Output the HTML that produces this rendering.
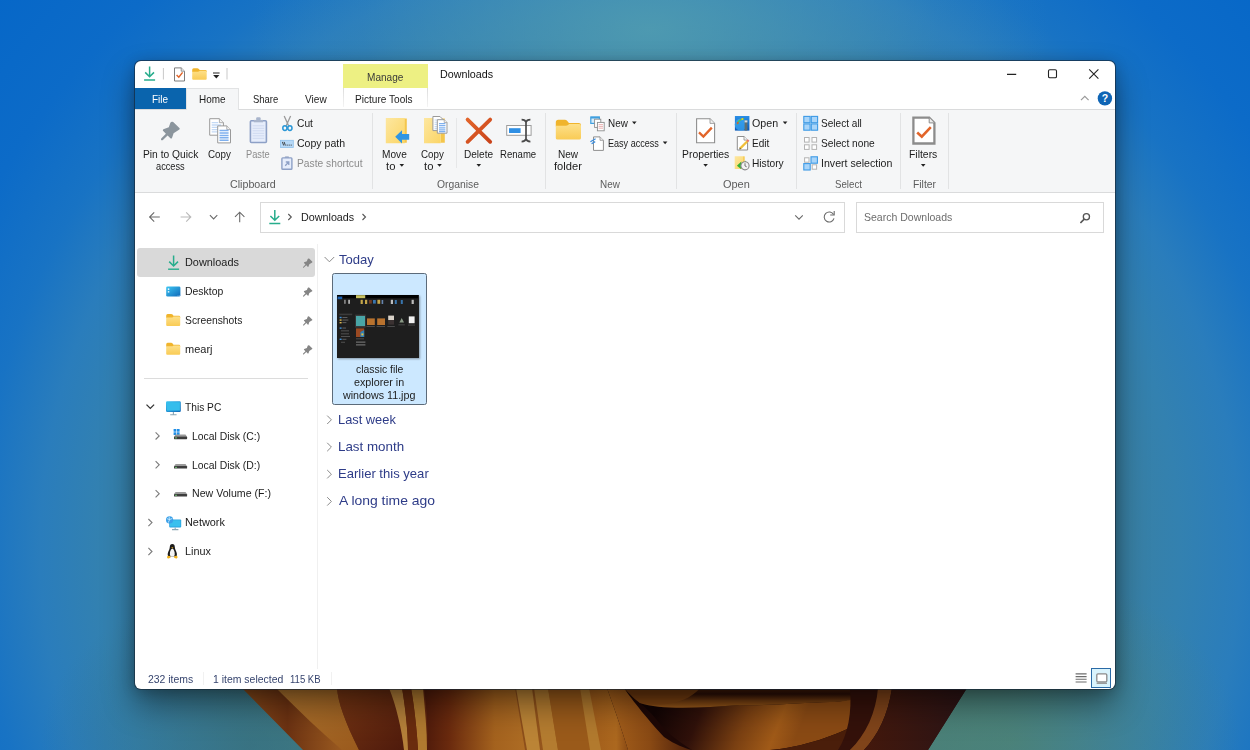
<!DOCTYPE html>
<html><head><meta charset="utf-8"><title>Downloads</title>
<style>
*{box-sizing:border-box;margin:0;padding:0}
html,body{width:1250px;height:750px;overflow:hidden}
body{position:relative;font-family:"Liberation Sans",sans-serif;font-size:10.3px;color:#222;background:#0a6ac8}
#bloom{position:absolute;left:0;top:0}
#win{position:absolute;left:135px;top:61px;width:980.4px;height:627.5px;background:#fff;border-radius:6px;overflow:hidden;
box-shadow:0 0 0 1px rgba(22,38,55,.62),0 16px 32px rgba(0,0,0,.42),0 2px 14px rgba(0,0,0,.22)}
#c{position:absolute;left:-135px;top:-61px;width:1250px;height:750px}
.t{position:absolute;white-space:nowrap;transform-origin:0 50%}
.b{position:absolute}
#ic{position:absolute;left:0;top:0}

#bg{position:absolute;left:0;top:0;width:1250px;height:750px;
background:radial-gradient(ellipse 210px 160px at 250px 745px, rgba(52,104,112,.55) 0, rgba(52,104,112,0) 100%),radial-gradient(ellipse 230px 170px at 1010px 740px, rgba(84,132,100,.55) 0, rgba(84,132,100,0) 100%),radial-gradient(ellipse 400px 200px at 650px 30px, rgba(84,160,178,.78) 0, rgba(76,152,182,.5) 40%, rgba(66,145,188,.16) 72%, rgba(60,140,190,0) 100%),
radial-gradient(circle at 640px 550px, #4f7d6a 0px, #4b7c70 260px, #437f8a 380px, #3b80a0 470px, #3381b0 540px, #2a7dbc 600px, #1873c4 660px, #0c6bc8 740px, #0667c8 850px);}

</style></head>
<body>
<div id="bg"></div>
<svg id="bloom" width="1250" height="750" viewBox="0 0 1250 750">
<defs>
<linearGradient id="gb" x1="243" y1="0" x2="967" y2="0" gradientUnits="userSpaceOnUse">
<stop offset="0" stop-color="#7a3f18"/><stop offset=".25" stop-color="#62270f"/><stop offset=".45" stop-color="#a0601f"/><stop offset=".62" stop-color="#7f3f12"/><stop offset=".85" stop-color="#43190c"/><stop offset="1" stop-color="#2a1414"/>
</linearGradient>
<linearGradient id="g1" x1="0" y1="0" x2="1" y2="0"><stop offset="0" stop-color="#8a4c1b"/><stop offset=".45" stop-color="#6c3212"/><stop offset="1" stop-color="#9a5a20"/></linearGradient>
<linearGradient id="g2" x1="0" y1="0" x2="1" y2="1"><stop offset="0" stop-color="#b0762f"/><stop offset="1" stop-color="#9a5a1d"/></linearGradient>
<linearGradient id="g3" x1="0" y1="0" x2="1" y2="1"><stop offset="0" stop-color="#7a3814"/><stop offset="1" stop-color="#4e1a0c"/></linearGradient>
<linearGradient id="g4" x1="0" y1="0" x2="1" y2="0"><stop offset="0" stop-color="#4e1a0b"/><stop offset=".25" stop-color="#6a2a0e"/><stop offset=".7" stop-color="#a4621e"/><stop offset="1" stop-color="#ad6c24"/></linearGradient>
<linearGradient id="g5" x1="0" y1="688" x2="0" y2="750" gradientUnits="userSpaceOnUse"><stop offset="0" stop-color="#7a4012"/><stop offset=".16" stop-color="#915016"/><stop offset=".3" stop-color="#50200a"/><stop offset=".42" stop-color="#1a0605"/><stop offset=".64" stop-color="#220905"/><stop offset=".82" stop-color="#70360e"/><stop offset="1" stop-color="#9a5818"/></linearGradient>
<linearGradient id="g6" x1="0" y1="0" x2="1" y2="0"><stop offset="0" stop-color="#7c4212" stop-opacity="0"/><stop offset=".55" stop-color="#7c4212" stop-opacity=".92"/><stop offset="1" stop-color="#5a2a0e"/></linearGradient>
<linearGradient id="g7" x1="0" y1="0" x2="1" y2="0"><stop offset="0" stop-color="#43180c"/><stop offset="1" stop-color="#2b1416"/></linearGradient>
<linearGradient id="g8" x1="0" y1="0" x2="1" y2="1"><stop offset="0" stop-color="#96561a"/><stop offset="1" stop-color="#a8641e"/></linearGradient>
<linearGradient id="h1" x1="0" y1="0" x2="1" y2="0"><stop offset="0" stop-color="#a05c1a"/><stop offset=".7" stop-color="#ac681f"/><stop offset="1" stop-color="#8a4a14"/></linearGradient>
<linearGradient id="h2" x1="0" y1="0" x2="1" y2="0"><stop offset="0" stop-color="#a8621c"/><stop offset=".5" stop-color="#8a4a14"/><stop offset="1" stop-color="#4a1e0a"/></linearGradient>
<linearGradient id="h3" x1="0" y1="688" x2="0" y2="708" gradientUnits="userSpaceOnUse"><stop offset="0" stop-color="#4a200a"/><stop offset=".3" stop-color="#2c0f07"/><stop offset=".62" stop-color="#6a3810"/><stop offset="1" stop-color="#9a5a1a"/></linearGradient>
<linearGradient id="h4" x1="660" y1="700" x2="790" y2="752" gradientUnits="userSpaceOnUse"><stop offset="0" stop-color="#120404"/><stop offset=".3" stop-color="#30110a"/><stop offset=".62" stop-color="#7a4012"/><stop offset=".85" stop-color="#a05a18"/><stop offset="1" stop-color="#8a4a14"/></linearGradient>
</defs>
<path d="M243 688 L967 688 L928 750 L306 750 Z" fill="url(#gb)"/>
<path d="M242 688 L278 688 C298 710 322 733 343 750 L303 750 Z" fill="url(#g1)"/>
<path d="M276 688 L337 688 C338 702 345 722 359 750 L342 750 C322 733 298 710 276 688 Z" fill="url(#g2)"/>
<path d="M337 688 L390 688 C396 705 402 730 404 750 L359 750 C345 722 338 702 337 688Z" fill="url(#g3)"/>
<path d="M389 688 L402 688 C405 705 408 730 408 750 L404 750 C402 730 396 705 389 688Z" fill="#b5803a"/>
<path d="M411 688 L423 688 C425 710 427 730 427 750 L418 750 C417 730 414 705 411 688Z" fill="#b07a30"/>
<path d="M402 688 L411 688 C414 705 417 730 418 750 L408 750 C408 730 405 705 402 688Z" fill="#6a2c0e"/>
<path d="M424 688 L515 688 L525 750 L427 750 C428 730 427 710 424 688Z" fill="url(#g4)"/>
<path d="M516 688 L532 688 L540 750 L527 750Z" fill="#bb8436"/>
<path d="M534 688 L548 688 L558 750 L543 750Z" fill="#b47c30"/>
<path d="M548 688 L588 688 L598 750 L558 750Z" fill="#9a5a1a"/>
<path d="M604 688 L900 688 L880 750 L618 750Z" fill="#1e0806"/>
<path d="M580 688 L590 688 L602 750 L590 750Z" fill="#b27a2e"/>
<path d="M589 688 L607 688 C614 708 622 730 628 750 L601 750Z" fill="url(#h1)"/>
<!-- right part -->
<path d="M607 688 L624 688 C632 700 650 722 664 737 C676 745 684 748 692 750 L628 750 C622 730 614 708 607 688Z" fill="url(#h2)"/>
<path d="M640 703 C660 710 700 708 740 705 C760 706 800 703 830 702 C845 702 858 698 870 690 L864 720 C840 735 800 748 770 750 L692 750 C676 740 664 730 656 719 C650 712 645 707 640 703Z" fill="url(#h4)"/>
<path d="M624 688 L882 688 C862 700 842 702 830 702 C800 703 760 706 740 705 C700 708 660 710 640 703 C632 697 628 692 624 688Z" fill="url(#h3)"/>
<path d="M624 688 L700 688 C690 700 670 708 640 703 C632 697 628 692 624 688Z" fill="#7c4212" opacity=".8"/>
<path d="M770 750 C800 748 840 735 864 720 L862 750Z" fill="#4a1e0a"/>
<path d="M850 688 L880 688 C876 712 866 735 850 750 L838 750 C848 735 852 712 850 688Z" fill="#34110a"/>
<path d="M878 688 L892 688 C888 715 878 735 864 750 L850 750 C866 735 876 712 878 688Z" fill="#80441a"/>
<path d="M892 688 L967 688 L928 750 L864 750 C878 735 888 715 892 688Z" fill="url(#g7)"/>
</svg>
<div id="win"><div id="c">
<div class="b" style="left:342.5px;top:64px;width:85px;height:24px;background:#edf083"></div>
<div class="b" style="left:135px;top:88px;width:51px;height:21px;background:#0a64ad"></div>
<div class="b" style="left:135px;top:109px;width:981px;height:84px;background:#f5f6f7;border-top:1px solid #dadbdc;border-bottom:1px solid #dadbdc"></div>
<div class="b" style="left:186px;top:88px;width:52.5px;height:22px;background:#f5f6f7;border:1px solid #e2e3e4;border-bottom:none"></div>
<div class="b" style="left:342.5px;top:88px;width:1px;height:19px;background:linear-gradient(#dcdcdc,#f4f4f4)"></div>
<div class="b" style="left:426.5px;top:88px;width:1px;height:19px;background:linear-gradient(#dcdcdc,#f4f4f4)"></div>
<div class="b" style="left:371.5px;top:113px;width:1px;height:76px;background:#e2e3e4"></div>
<div class="b" style="left:456.3px;top:118px;width:1px;height:50px;background:#e6e7e8"></div>
<div class="b" style="left:545px;top:113px;width:1px;height:76px;background:#e2e3e4"></div>
<div class="b" style="left:676.3px;top:113px;width:1px;height:76px;background:#e2e3e4"></div>
<div class="b" style="left:796px;top:113px;width:1px;height:76px;background:#e2e3e4"></div>
<div class="b" style="left:900px;top:113px;width:1px;height:76px;background:#e2e3e4"></div>
<div class="b" style="left:948.3px;top:113px;width:1px;height:76px;background:#e2e3e4"></div>
<div class="b" style="left:259.5px;top:202px;width:585.5px;height:30.5px;border:1px solid #d9d9d9"></div>
<div class="b" style="left:856px;top:202px;width:248px;height:30.5px;border:1px solid #d9d9d9"></div>
<div class="b" style="left:137.4px;top:248px;width:177.6px;height:28.6px;background:#d9d9d9;border-radius:3px"></div>
<div class="b" style="left:144px;top:378px;width:164px;height:1px;background:#dcdcdc"></div>
<div class="b" style="left:317px;top:244px;width:1px;height:425px;background:#f0f0f0"></div>
<div class="b" style="left:332px;top:273.3px;width:94.5px;height:131.4px;background:#cce8ff;border:1px solid #5c6b7a;border-radius:2.5px"></div>
<div class="b" style="left:337px;top:294.8px;width:81.5px;height:62.8px;background:#1e1e1e;box-shadow:1px 1px 2px rgba(0,0,0,.35)"></div>
<div class="b" style="left:202.5px;top:672px;width:1px;height:13px;background:#f1f1f1"></div>
<div class="b" style="left:330.8px;top:672px;width:1px;height:13px;background:#f1f1f1"></div>
<div class="b" style="left:1091px;top:668px;width:20px;height:20.4px;background:#d9f3fc;border:1px solid #2a6aa6"></div>

<svg id="ic" width="1250" height="750" viewBox="0 0 1250 750" fill="none">
<defs>
<linearGradient id="fy" x1="0" y1="0" x2="0" y2="1"><stop offset="0" stop-color="#fde08a"/><stop offset="1" stop-color="#f9cb55"/></linearGradient>
<linearGradient id="fy2" x1="0" y1="0" x2="1" y2="1"><stop offset="0" stop-color="#fde7a0"/><stop offset="1" stop-color="#fbd566"/></linearGradient>
<linearGradient id="dk" x1="0" y1="0" x2="1" y2="1"><stop offset="0" stop-color="#3cc6f3"/><stop offset="1" stop-color="#0f68b8"/></linearGradient>
<linearGradient id="xr" x1="0" y1="0" x2="1" y2="1"><stop offset="0" stop-color="#e2642a"/><stop offset="1" stop-color="#c9431a"/></linearGradient>
<linearGradient id="op" x1="0" y1="0" x2="0" y2="1"><stop offset="0" stop-color="#2a8fe6"/><stop offset="1" stop-color="#0a58b8"/></linearGradient>
<g id="fold"><path d="M0 1.6 Q0 0 1.4 0 L5 0 Q5.8 0 6.4 .7 L7.3 1.9 L12.8 1.9 Q14 1.9 14 3.1 L14 4 L0 4Z" fill="#f0b42c"/><path d="M0 3.6 L5.6 3.6 Q6.3 3.6 6.8 3.1 L7.4 2.6 L13 2.6 Q14 2.6 14 3.7 L14 11 Q14 12 13 12 L1 12 Q0 12 0 11Z" fill="url(#fy)"/></g>
<g id="pin"><path transform="scale(.5) translate(-161 -121.6)" d="M172 121.8 Q171 121.8 170.4 122.8 L168.8 127.2 L163.4 129.2 Q162.4 129.8 163 130.8 L165.9 133.7 L161.2 138.6 Q160.6 139.6 161.4 140.2 Q162.2 140.6 162.9 140 L167.6 135.4 L170.4 138.2 Q171.4 139 172 138 L173.6 133.2 L179.4 129.6 Q180.2 128.8 179.4 128 L173.2 122 Q172.6 121.6 172 121.8Z" fill="#858585"/></g>
<g id="dl"><path d="M5.5 0 V10 M1.1 6 L5.5 10.4 L9.9 6" stroke="#27ad8c" stroke-width="1.5" fill="none"/><path d="M0 13.6 H11" stroke="#27ad8c" stroke-width="1.4"/></g>
<g id="chev"><path d="M0 0 L3.6 3.6 L0 7.2" stroke="#7a7a7a" stroke-width="1.1" fill="none"/></g>
<g id="drv"><path d="M1.6 0 H11.5 L13 2.2 H0Z" fill="#9a9a9a"/><rect x="0" y="2" width="13.1" height="2.6" rx=".6" fill="#3d3d3d"/><rect x="1" y="2.9" width="2" height=".8" fill="#7be07b"/></g>
<g id="doc"><path d="M.5 .5 H7 L10.5 4 V14 H.5Z" fill="#fff" stroke="#8e8e8e"/><path d="M7 .5 V4 H10.5" fill="#f0f0f0" stroke="#8e8e8e" stroke-width=".8"/></g>
<g id="tri"><path d="M0 0 H4.6 L2.3 2.7Z" fill="#222"/></g>
<filter id="bl" x="-5%" y="-5%" width="110%" height="110%"><feGaussianBlur stdDeviation=".35"/></filter>
</defs>

<!-- title bar -->
<use href="#dl" x="144.1" y="66.4"/>
<path d="M163.4 68 V79.5 M227 68 V79.5" stroke="#c9c9c9" stroke-width="1"/>
<g transform="translate(174 67.4)"><path d="M.5 .5 H7.2 L10.5 3.8 V13.6 H.5Z" fill="#fff" stroke="#7d7d7d"/><path d="M7.2 .5 V3.8 H10.5" stroke="#7d7d7d" stroke-width=".8" fill="#eee"/><path d="M2.6 7.6 L4.8 9.8 L8.6 5" stroke="#e0652a" stroke-width="1.5" fill="none"/></g>
<g transform="translate(192.2 68.2) scale(1.035 0.97)"><use href="#fold"/></g>
<path d="M213 73 H219.6" stroke="#222" stroke-width="1.1"/><path d="M213.2 75 H219.4 L216.3 78.6Z" fill="#222"/>
<!-- window controls -->
<path d="M1007 74.4 H1016.2" stroke="#222" stroke-width="1.1"/>
<rect x="1048.5" y="69.8" width="8" height="8" rx="1.3" stroke="#222" stroke-width="1.1"/>
<path d="M1089.2 69.4 L1098.4 78.6 M1098.4 69.4 L1089.2 78.6" stroke="#222" stroke-width="1.1"/>
<path d="M1081 100.2 L1084.8 96.4 L1088.6 100.2" stroke="#9a9a9a" stroke-width="1.2"/>
<circle cx="1104.9" cy="98.4" r="7.2" fill="#0f65b5"/>
<text x="1104.9" y="102.3" font-family="Liberation Sans, sans-serif" font-weight="bold" font-size="10.5" fill="#fff" text-anchor="middle">?</text>

<!-- ribbon: pin -->
<path id="bigpin" d="M172 121.8 Q171 121.8 170.4 122.8 L168.8 127.2 L163.4 129.2 Q162.4 129.8 163 130.8 L165.9 133.7 L161.2 138.6 Q160.6 139.6 161.4 140.2 Q162.2 140.6 162.9 140 L167.6 135.4 L170.4 138.2 Q171.4 139 172 138 L173.6 133.2 L179.4 129.6 Q180.2 128.8 179.4 128 L173.2 122 Q172.6 121.6 172 121.8Z" fill="#8b959d"/>
<!-- copy -->
<g transform="translate(209.2 118.2)"><path d="M.5 .5 H10.2 L14.2 4.5 V17 H.5Z" fill="#fff" stroke="#9a9a9a"/><path d="M10.2 .5 V4.5 H14.2" stroke="#9a9a9a" stroke-width=".8" fill="#f2f2f2"/><path d="M2.5 4.5 H9 M2.5 6.8 H12 M2.5 9.1 H12 M2.5 11.4 H12 M2.5 13.7 H12" stroke="#c3d9f5" stroke-width="1.3"/></g>
<g transform="translate(217.2 125.4)"><path d="M.5 .5 H9.6 L13.3 4.2 V17.5 H.5Z" fill="#fff" stroke="#9a9a9a"/><path d="M9.6 .5 V4.2 H13.3" stroke="#9a9a9a" stroke-width=".8" fill="#f2f2f2"/><path d="M2.3 5.2 H11.4 M2.3 7.6 H11.4 M2.3 10 H11.4 M2.3 12.4 H11.4 M2.3 14.8 H11.4" stroke="#7fb0ee" stroke-width="1.5"/></g>
<!-- paste -->
<g transform="translate(249.6 117.3)"><rect x="6.6" y="0" width="4.4" height="4" rx="1" fill="#a9b5cc"/><rect x=".8" y="3.4" width="16" height="21.8" rx="1" fill="#e6edfb" stroke="#8da0c6" stroke-width="1.6"/><rect x="4.2" y="2.6" width="9.2" height="2.4" fill="#a9b5cc"/><path d="M3 8.5 H14.6 M3 11 H14.6 M3 13.5 H14.6 M3 16 H14.6 M3 18.5 H14.6 M3 21 H14.6" stroke="#cfd9f0" stroke-width="1"/></g>
<!-- cut -->
<g transform="translate(282 115.7)"><path d="M2.2 .3 L6.6 10 M8.6 .3 L4.2 10" stroke="#9a9a9a" stroke-width="1.3"/><ellipse cx="2.9" cy="12.4" rx="2.1" ry="2.4" stroke="#2a97d6" stroke-width="1.5"/><ellipse cx="7.9" cy="12.4" rx="2.1" ry="2.4" stroke="#2a97d6" stroke-width="1.5"/></g>
<!-- copy path -->
<g transform="translate(280.1 139.9)"><rect x=".4" y=".4" width="12.8" height="7.2" fill="#b7d9f7" stroke="#90c0ea" stroke-width=".8"/><path d="M2.3 2 L3.6 5.6 M4 2 L5.3 5.6" stroke="#333" stroke-width=".9"/><path d="M6.6 5.2 h1 M8.6 5.2 h1 M10.6 5.2 h1" stroke="#333" stroke-width="1"/></g>
<!-- paste shortcut -->
<g transform="translate(281.2 156.2)"><rect x="3.6" y="0" width="4.2" height="2.4" rx=".8" fill="#a9b5cc"/><rect x=".7" y="1.7" width="10" height="11.4" rx=".8" fill="#e6edfb" stroke="#8da0c6" stroke-width="1.4"/><path d="M4 9.6 L7.2 6.2 M4.6 5.8 H7.6 V8.8" stroke="#8da0c6" stroke-width="1.3"/></g>
<!-- move to -->
<g transform="translate(385.8 118)"><path d="M17 .6 H21 V24.8 H17Z" fill="#f4c64c"/><path d="M0 0 H19 V25.2 H0Z" fill="url(#fy2)"/><path d="M9.4 18.8 L16.2 12.2 V16 H23.4 V21.8 H16.2 V25.6Z" fill="#2f95e2"/></g>
<!-- copy to -->
<g transform="translate(424 118)"><path d="M16.8 .6 H20.8 V24.8 H16.8Z" fill="#f4c64c"/><path d="M0 0 H16.8 V25.2 H0Z" fill="url(#fy2)"/></g>
<g transform="translate(432.4 116)"><path d="M.5 .5 H7.6 L10.6 3.5 V14.6 H.5Z" fill="#fff" stroke="#9a9a9a"/><path d="M2.2 4 H8.6 M2.2 6.2 H8.6 M2.2 8.4 H8.6 M2.2 10.6 H8.6 M2.2 12.6 H8.6" stroke="#c3d9f5" stroke-width="1.1"/></g>
<g transform="translate(436.8 119.2)"><path d="M.5 .5 H7.4 L10.2 3.3 V14 H.5Z" fill="#fff" stroke="#9a9a9a"/><path d="M7.4 .5 V3.3 H10.2" stroke="#9a9a9a" stroke-width=".7" fill="#f2f2f2"/><path d="M2.2 4.4 H8.6 M2.2 6.5 H8.6 M2.2 8.6 H8.6 M2.2 10.7 H8.6 M2.2 12.4 H8.6" stroke="#7fb0ee" stroke-width="1.2"/></g>
<!-- delete -->
<path d="M467.6 119.6 L490.2 141.8 M490.2 119.6 L467.6 141.8" stroke="url(#xr)" stroke-width="3.8" stroke-linecap="round"/>
<!-- rename -->
<g transform="translate(506.2 119)"><rect x=".5" y="6.5" width="24.4" height="9.8" fill="#fff" stroke="#9d9d9d"/><rect x="2.8" y="9.2" width="11.6" height="4.8" fill="#2f8fe4"/><path d="M15.4 .6 Q19.2 .6 19.8 3.4 Q20.4 .6 24.2 .6 M15.4 22.6 Q19.2 22.6 19.8 19.8 Q20.4 22.6 24.2 22.6 M19.8 3 V20" stroke="#4a4a4a" stroke-width="1.7" fill="none"/></g>
<!-- new folder -->
<g transform="translate(555.8 119.8) scale(1.8 1.65)"><use href="#fold"/></g>
<!-- new item -->
<g transform="translate(590.2 116.4)"><rect x=".6" y=".6" width="8.6" height="6.4" fill="#d6ecfb" stroke="#3f9fdf" stroke-width="1.2"/><path d="M.6 1.2 H9.2" stroke="#3f9fdf" stroke-width="1.6"/><rect x="4.4" y="2.8" width="6.2" height="8.2" fill="#fff" stroke="#8e8e8e" stroke-width=".9"/><rect x="7.2" y="6" width="6.8" height="8.4" fill="#fff" stroke="#8e8e8e" stroke-width=".9"/><path d="M8.4 8.2 H12.8 M8.4 10 H12.8 M8.4 11.8 H12.8" stroke="#e6a0a0" stroke-width=".8"/></g>
<!-- easy access -->
<g transform="translate(593 136.4)"><path d="M.5 .5 H7 L10.4 3.9 V14 H.5Z" fill="#fff" stroke="#8e8e8e"/><path d="M7 .5 V3.9 H10.4" stroke="#8e8e8e" stroke-width=".8" fill="#f2f2f2"/><path d="M-2.6 5.4 L2.6 2.4 M-1.4 7.4 L2.2 5.2" stroke="#3c8fe0" stroke-width="1.3"/></g>
<use href="#tri" x="632" y="121.6"/><use href="#tri" x="662.8" y="141.6"/>
<use href="#tri" x="399.5" y="164"/><use href="#tri" x="437.2" y="164"/><use href="#tri" x="476.5" y="164"/><use href="#tri" x="703.3" y="164"/><use href="#tri" x="782.8" y="121.6"/><use href="#tri" x="920.9" y="164"/>
<!-- properties -->
<g transform="translate(696 118.2)"><path d="M.6 .6 H14 L18.6 5.2 V24.6 H.6Z" fill="#fff" stroke="#8e8e8e" stroke-width="1.1"/><path d="M14 .6 V5.2 H18.6" stroke="#8e8e8e" stroke-width=".8" fill="#f0f0f0"/><path d="M3 14.2 L7.4 18.4 L15.8 9.4" stroke="#e2652a" stroke-width="2.3" fill="none"/></g>
<!-- open -->
<g transform="translate(734.9 116)"><rect x="0" y="0" width="14.5" height="14.6" fill="url(#op)"/><circle cx="6" cy="8.6" r="6.2" fill="#3aa6f2" opacity=".75"/><path d="M2.4 8.4 Q3.4 3.4 9.2 2.8" stroke="#5cc24a" stroke-width="1.5" fill="none"/><circle cx="2.8" cy="7" r="1" fill="#d9553a"/><circle cx="7.4" cy="2.9" r="1" fill="#ecc63a"/><rect x="9.7" y="4.4" width="2.8" height="10.2" fill="#5f6f72"/><rect x="9.7" y="4.4" width="2.8" height="2" fill="#d5dde0"/></g>
<!-- edit -->
<g transform="translate(736.8 136)"><path d="M.5 .5 H7.2 L10.8 4.1 V14 H.5Z" fill="#fff" stroke="#8e8e8e"/><path d="M7.2 .5 V4.1 H10.8" stroke="#8e8e8e" stroke-width=".8" fill="#f2f2f2"/><path d="M3.2 12.6 L10.8 5" stroke="#f0bf3a" stroke-width="2.2"/><path d="M10.4 5.4 L11.8 4" stroke="#e8746a" stroke-width="2.2"/><path d="M2.4 13.6 L3 11.6 L4.4 13Z" fill="#555"/></g>
<!-- history -->
<g transform="translate(734.7 156.2)"><path d="M0 0 H9.8 V12.8 H0Z" fill="url(#fy2)"/><path d="M8.6 .4 H9.8 V12.6 H8.6Z" fill="#f4c64c"/><path d="M2.2 9.6 L6.6 5.2 V7.4 Q10 6.6 11.4 4.4 Q11 9.8 6.6 10.6 V13Z" fill="#35b233"/><circle cx="10.3" cy="9.6" r="4.1" fill="#f3f3f3" stroke="#8a8a8a" stroke-width="1.1"/><path d="M10.3 7 V9.8 L12 10.6" stroke="#666" stroke-width=".9"/></g>
<!-- select all -->
<g transform="translate(803.2 115.8)" stroke="#3c9ae6" stroke-width="1.1" fill="#a9d5f9"><rect x=".6" y=".6" width="6.3" height="6.3"/><rect x="8.1" y=".6" width="6.3" height="6.3"/><rect x=".6" y="8.1" width="6.3" height="6.3"/><rect x="8.1" y="8.1" width="6.3" height="6.3"/></g>
<g transform="translate(804 137)" stroke="#b3b3b3" stroke-width="1" fill="#fff"><rect x=".5" y=".5" width="4.6" height="4.6"/><rect x="8" y=".5" width="4.6" height="4.6"/><rect x=".5" y="7.8" width="4.6" height="4.6"/><rect x="8" y="7.8" width="4.6" height="4.6"/></g>
<g transform="translate(803.2 156.2)"><rect x="1.4" y="1.6" width="4.4" height="4.4" fill="#fff" stroke="#b3b3b3"/><rect x="9" y="8.6" width="4.4" height="4.4" fill="#fff" stroke="#b3b3b3"/><rect x="7.8" y=".6" width="6.4" height="6.4" fill="#a9d5f9" stroke="#3c9ae6" stroke-width="1.1"/><rect x=".6" y="7.4" width="6.4" height="6.4" fill="#a9d5f9" stroke="#3c9ae6" stroke-width="1.1"/></g>
<!-- filters -->
<g transform="translate(912.2 116.5)"><path d="M1.2 1.2 H17 L22.2 6.4 V27 H1.2Z" fill="#fff" stroke="#8c8c8c" stroke-width="2.3"/><path d="M17 1.2 V6.4 H22.2" stroke="#8c8c8c" stroke-width="1" fill="#eee"/><path d="M5 16 L9.6 20.2 L18.6 10.6" stroke="#e2652a" stroke-width="2.6" fill="none"/></g>

<!-- address bar -->
<path d="M159.8 217 H149.6 M154.2 212.4 L149.6 217 L154.2 221.6" stroke="#6a6a6a" stroke-width="1.1"/>
<path d="M180.6 217 H190.8 M186.2 212.4 L190.8 217 L186.2 221.6" stroke="#b9b9b9" stroke-width="1.1"/>
<path d="M209.9 215.2 L213.6 218.9 L217.3 215.2" stroke="#6a6a6a" stroke-width="1.1"/>
<path d="M239.7 222.2 V212.2 M235 216.9 L239.7 212.2 L244.4 216.9" stroke="#6a6a6a" stroke-width="1.1"/>
<g transform="translate(269.3 210) scale(1 0.99)"><use href="#dl"/></g>
<path d="M288.3 214 L291.3 217 L288.3 220 M362.5 214 L365.5 217 L362.5 220" stroke="#555" stroke-width="1.1"/>
<path d="M795.2 215.4 L799 219.2 L802.8 215.4" stroke="#6a6a6a" stroke-width="1.1"/>
<path d="M833.6 214.6 A5 5 0 1 0 834 218.4" stroke="#6a6a6a" stroke-width="1.1"/><path d="M834.2 211 V215 H830.2" stroke="#6a6a6a" stroke-width="1.1"/>
<circle cx="1086.4" cy="216.8" r="3.1" stroke="#555" stroke-width="1.3"/><path d="M1084.2 219.2 L1080.4 223" stroke="#555" stroke-width="1.7"/>

<!-- sidebar -->
<use href="#dl" x="168.1" y="255.6"/>
<use href="#pin" x="303" y="258.4"/><use href="#pin" x="303" y="287.3"/><use href="#pin" x="303" y="316.2"/><use href="#pin" x="303" y="345.1"/>
<g transform="translate(166.2 286.4)"><rect x="0" y="0" width="14.2" height="10.2" rx="1.4" fill="url(#dk)"/><rect x="1.6" y="2" width="1.5" height="1.5" fill="#fff"/><rect x="1.6" y="4.8" width="1.5" height="1.3" fill="#fff"/><path d="M11.4 9.6 h.9 M12.8 9.6 h.9" stroke="#bfe3f7" stroke-width=".8"/></g>
<g transform="translate(166.2 313.9)"><use href="#fold"/></g>
<g transform="translate(166.2 342.8)"><use href="#fold"/></g>
<path d="M146.5 404.6 L150.3 408.4 L154.1 404.6" stroke="#333" stroke-width="1.3"/>
<g transform="translate(166 401.3)"><rect x="0" y="0" width="14.8" height="10.6" rx="1.2" fill="url(#dk)"/><rect x=".9" y=".9" width="13" height="8.4" fill="#35bdec"/><path d="M7.4 10.6 V13 M4.2 13.4 H10.6" stroke="#8aa6b5" stroke-width="1.1"/></g>
<use href="#chev" x="155.6" y="432.3"/><use href="#chev" x="155.6" y="461.2"/><use href="#chev" x="155.6" y="490.1"/><use href="#chev" x="148.4" y="519"/><use href="#chev" x="148.4" y="547.9"/>
<g transform="translate(173.6 429)"><rect x="0" y="0" width="2.7" height="2.7" fill="#1f8ee6"/><rect x="3.3" y="0" width="2.7" height="2.7" fill="#1f8ee6"/><rect x="0" y="3.3" width="2.7" height="2.7" fill="#1f8ee6"/><rect x="3.3" y="3.3" width="2.7" height="2.7" fill="#1f8ee6"/></g>
<use href="#drv" x="174" y="434.6"/><use href="#drv" x="174" y="464"/><use href="#drv" x="174" y="491.9"/>
<!-- network -->
<g transform="translate(166 516.1)"><rect x="3.2" y="3.4" width="12" height="8" rx="1" fill="#2aa4e0"/><rect x="4" y="4.2" width="10.4" height="6.2" fill="#39c0ee"/><path d="M9.2 11.4 V13.2 M6 13.5 H12.4" stroke="#8aa6b5" stroke-width="1.1"/><circle cx="3.6" cy="3.8" r="3.6" fill="#3aa0e8"/><path d="M1 2.6 Q3 4.4 6.4 2.4 M2.2 6.6 Q4 4.6 3.2 .6" stroke="#d9f1ff" stroke-width=".8" fill="none"/></g>
<!-- linux -->
<g transform="translate(167.2 544)"><path d="M5.1 0 Q7.6 0 7.6 3 Q7.6 5 9.2 8 Q10.4 10.6 9.4 12.6 L.8 12.6 Q-.2 10.6 1 8 Q2.6 5 2.6 3 Q2.6 0 5.1 0Z" fill="#1c1c1c"/><path d="M5.1 4.6 Q6.6 4.8 7.4 8 Q8 11.4 6.6 12.6 L3.6 12.6 Q2.2 11.4 2.8 8 Q3.6 4.8 5.1 4.6Z" fill="#f4f4f4"/><path d="M4 3.2 L6.2 3.2 L5.1 4.4Z" fill="#f2b21c"/><path d="M0 12.2 Q2 11 3.6 13 Q3.2 14.6 .6 14.4 Q-.6 13.6 0 12.2Z M10.2 12.2 Q8.2 11 6.6 13 Q7 14.6 9.6 14.4 Q10.8 13.6 10.2 12.2Z" fill="#f2b21c"/></g>

<!-- thumbnail -->
<g filter="url(#bl)">
<rect x="337.3" y="295" width="80.7" height="3.3" fill="#060606"/>
<rect x="337.6" y="296.6" width="4.6" height="2.6" fill="#1f5fae"/>
<rect x="356" y="295.2" width="9.2" height="3" fill="#c9c263"/>
<g opacity=".9"><rect x="344" y="299.8" width="1.8" height="4" fill="#8a8a8a"/><rect x="348.2" y="299.8" width="1.8" height="4" fill="#bdbdbd"/><rect x="360.6" y="299.8" width="2.2" height="4.2" fill="#d9b650"/><rect x="365" y="299.8" width="2.2" height="4.2" fill="#d9b650"/><rect x="369" y="300" width="2.8" height="3.6" fill="#7a3f22"/><rect x="373" y="300" width="2.8" height="3.6" fill="#3c7fbe"/><rect x="377.4" y="299.8" width="2.8" height="4" fill="#d9b650"/><rect x="381.6" y="300" width="1.6" height="4" fill="#6f8fbf"/><rect x="390.8" y="299.8" width="2.2" height="4.2" fill="#cfcfcf"/><rect x="394.8" y="300" width="2" height="4" fill="#3c7fbe"/><rect x="400.8" y="300" width="2" height="4" fill="#3c7fbe"/><rect x="411.6" y="299.8" width="2.2" height="4.2" fill="#cfcfcf"/></g>
<rect x="355.2" y="314.6" width="10.4" height="13" fill="#3a3a3a"/>
<rect x="356" y="316" width="9" height="10" fill="#4aa5a6"/>
<rect x="367" y="318.4" width="7.8" height="6.6" fill="#b8722e"/><rect x="377.2" y="318.4" width="7.8" height="6.6" fill="#b8722e"/>
<rect x="388.2" y="315.6" width="5.8" height="4.4" fill="#d9d2c8"/><rect x="388.2" y="320" width="5.8" height="4.6" fill="#3a3330"/>
<path d="M399.4 322.4 L401.7 318 L404 322.4Z" fill="#8a9a86"/>
<rect x="408.8" y="316.4" width="5.8" height="6.8" fill="#f2f2f2"/>
<rect x="356" y="328.4" width="8.2" height="8.6" fill="#9a4a22"/><path d="M360.4 332 L364.2 330 V337 H360.4Z" fill="#2f7fb8"/><rect x="361.4" y="333.4" width="2" height="2" fill="#e3c13c"/>
<g fill="#777"><rect x="366.4" y="326" width="8.4" height="1" opacity=".5"/><rect x="376.6" y="326" width="8.4" height="1" opacity=".5"/><rect x="387.4" y="326" width="7.4" height="1" opacity=".5"/><rect x="398.4" y="324.4" width="6.4" height=".9" opacity=".5"/><rect x="408" y="324.6" width="7" height=".9" opacity=".5"/><rect x="356" y="338.4" width="8" height=".9" opacity=".6"/><rect x="356" y="341.6" width="9.4" height="1" fill="#aaa" opacity=".7"/><rect x="356" y="344.4" width="9.4" height="1" fill="#aaa" opacity=".7"/></g>
<g><rect x="339.2" y="313.6" width="13" height="1.6" fill="#3a3a3a"/><rect x="339.6" y="316.8" width="2" height="1.4" fill="#3f8fd6"/><rect x="339.6" y="319.4" width="2" height="1.4" fill="#d9b650"/><rect x="339.6" y="322" width="2" height="1.4" fill="#d9b650"/><rect x="339.6" y="327.4" width="2" height="1.4" fill="#3f8fd6"/><rect x="339.6" y="338.6" width="2" height="1.4" fill="#3f8fd6"/><rect x="342.4" y="317" width="5" height=".9" fill="#666"/><rect x="342.4" y="319.6" width="6" height=".9" fill="#666"/><rect x="342.4" y="322.2" width="4" height=".9" fill="#666"/><rect x="342.4" y="327.6" width="3.6" height=".9" fill="#666"/><rect x="341" y="330.4" width="8" height=".9" fill="#555"/><rect x="341" y="333.4" width="8" height=".9" fill="#555"/><rect x="341" y="336" width="9" height=".9" fill="#555"/><rect x="342.4" y="338.8" width="4" height=".9" fill="#666"/><rect x="341" y="341.8" width="4" height=".9" fill="#555"/></g>
</g>
<!-- content -->
<path d="M324.6 257 L329.4 261.8 L334.2 257" stroke="#8a8a8a" stroke-width="1"/>
<path d="M327.2 415.6 L331.4 419.8 L327.2 424 M327.2 442.8 L331.4 447 L327.2 451.2 M327.2 470 L331.4 474.2 L327.2 478.4 M327.2 497.2 L331.4 501.4 L327.2 505.6" stroke="#8a8a8a" stroke-width="1"/>

<!-- status bar view buttons -->
<path d="M1075.6 673.9 H1086.6 M1075.6 676.6 H1086.6 M1075.6 679.3 H1086.6 M1075.6 682 H1086.6" stroke="#6d6d6d" stroke-width="1.1"/>
<rect x="1096.8" y="673.8" width="10" height="8.2" rx="1.2" stroke="#8a8a8a" stroke-width="1.3" fill="#fff"/><path d="M1096.6 683.4 H1107" stroke="#9a9a9a" stroke-width="1.2"/>
</svg>

<span class="t" style="left:439.50px;top:68.47px;font-size:10.2px;line-height:14px;color:#111;transform:scaleX(1.0535)">Downloads</span>
<span class="t" style="left:366.50px;top:70.57px;font-size:10.2px;line-height:14px;color:#3a3a3a;transform:scaleX(0.9879)">Manage</span>
<span class="t" style="left:152.40px;top:93.07px;font-size:10.2px;line-height:14px;color:#fff;transform:scaleX(0.9791)">File</span>
<span class="t" style="left:198.70px;top:93.07px;font-size:10.2px;line-height:14px;color:#1c1c1c;transform:scaleX(0.9742)">Home</span>
<span class="t" style="left:252.50px;top:93.07px;font-size:10.2px;line-height:14px;color:#1c1c1c;transform:scaleX(0.9266)">Share</span>
<span class="t" style="left:304.70px;top:93.07px;font-size:10.2px;line-height:14px;color:#1c1c1c;transform:scaleX(0.9894)">View</span>
<span class="t" style="left:355.20px;top:93.07px;font-size:10.2px;line-height:14px;color:#1c1c1c;transform:scaleX(0.9893)">Picture Tools</span>
<span class="t" style="left:142.70px;top:147.87px;font-size:10.2px;line-height:14px;color:#1c1c1c;transform:scaleX(1.0067)">Pin to Quick</span>
<span class="t" style="left:156.20px;top:159.67px;font-size:10.2px;line-height:14px;color:#1c1c1c;transform:scaleX(0.9047)">access</span>
<span class="t" style="left:207.70px;top:147.87px;font-size:10.2px;line-height:14px;color:#1c1c1c;transform:scaleX(0.9640)">Copy</span>
<span class="t" style="left:245.70px;top:147.87px;font-size:10.2px;line-height:14px;color:#8c8c8c;transform:scaleX(0.9096)">Paste</span>
<span class="t" style="left:297.40px;top:117.17px;font-size:10.2px;line-height:14px;color:#1c1c1c;transform:scaleX(1.0048)">Cut</span>
<span class="t" style="left:297.40px;top:136.97px;font-size:10.2px;line-height:14px;color:#1c1c1c;transform:scaleX(1.0355)">Copy path</span>
<span class="t" style="left:297.40px;top:156.97px;font-size:10.2px;line-height:14px;color:#8c8c8c;transform:scaleX(1.0063)">Paste shortcut</span>
<span class="t" style="left:230.30px;top:178.07px;font-size:10.2px;line-height:14px;color:#5c5c5c;transform:scaleX(1.0492)">Clipboard</span>
<span class="t" style="left:382.40px;top:147.87px;font-size:10.2px;line-height:14px;color:#1c1c1c;transform:scaleX(0.9942)">Move</span>
<span class="t" style="left:386.20px;top:159.67px;font-size:10.2px;line-height:14px;color:#1c1c1c;transform:scaleX(1.1098)">to</span>
<span class="t" style="left:421.30px;top:147.87px;font-size:10.2px;line-height:14px;color:#1c1c1c;transform:scaleX(0.9600)">Copy</span>
<span class="t" style="left:424.20px;top:159.67px;font-size:10.2px;line-height:14px;color:#1c1c1c;transform:scaleX(1.1098)">to</span>
<span class="t" style="left:463.60px;top:147.87px;font-size:10.2px;line-height:14px;color:#1c1c1c;transform:scaleX(0.9872)">Delete</span>
<span class="t" style="left:500.10px;top:147.87px;font-size:10.2px;line-height:14px;color:#1c1c1c;transform:scaleX(0.9397)">Rename</span>
<span class="t" style="left:436.70px;top:178.07px;font-size:10.2px;line-height:14px;color:#5c5c5c;transform:scaleX(1.0151)">Organise</span>
<span class="t" style="left:557.70px;top:147.87px;font-size:10.2px;line-height:14px;color:#1c1c1c;transform:scaleX(0.9846)">New</span>
<span class="t" style="left:553.80px;top:159.67px;font-size:10.2px;line-height:14px;color:#1c1c1c;transform:scaleX(1.0923)">folder</span>
<span class="t" style="left:607.70px;top:117.17px;font-size:10.2px;line-height:14px;color:#1c1c1c;transform:scaleX(0.9704)">New</span>
<span class="t" style="left:607.70px;top:136.97px;font-size:10.2px;line-height:14px;color:#1c1c1c;transform:scaleX(0.8898)">Easy access</span>
<span class="t" style="left:599.60px;top:178.07px;font-size:10.2px;line-height:14px;color:#5c5c5c;transform:scaleX(0.9704)">New</span>
<span class="t" style="left:682.20px;top:147.87px;font-size:10.2px;line-height:14px;color:#1c1c1c;transform:scaleX(1.0186)">Properties</span>
<span class="t" style="left:752.40px;top:117.17px;font-size:10.2px;line-height:14px;color:#1c1c1c;transform:scaleX(1.0472)">Open</span>
<span class="t" style="left:752.40px;top:136.97px;font-size:10.2px;line-height:14px;color:#1c1c1c;transform:scaleX(0.9874)">Edit</span>
<span class="t" style="left:752.40px;top:156.97px;font-size:10.2px;line-height:14px;color:#1c1c1c;transform:scaleX(0.9999)">History</span>
<span class="t" style="left:722.50px;top:178.07px;font-size:10.2px;line-height:14px;color:#5c5c5c;transform:scaleX(1.0760)">Open</span>
<span class="t" style="left:820.80px;top:117.17px;font-size:10.2px;line-height:14px;color:#1c1c1c;transform:scaleX(0.9885)">Select all</span>
<span class="t" style="left:820.80px;top:136.97px;font-size:10.2px;line-height:14px;color:#1c1c1c;transform:scaleX(0.9992)">Select none</span>
<span class="t" style="left:820.80px;top:156.97px;font-size:10.2px;line-height:14px;color:#1c1c1c;transform:scaleX(1.0405)">Invert selection</span>
<span class="t" style="left:834.50px;top:178.07px;font-size:10.2px;line-height:14px;color:#5c5c5c;transform:scaleX(0.9514)">Select</span>
<span class="t" style="left:909.30px;top:147.87px;font-size:10.2px;line-height:14px;color:#1c1c1c;transform:scaleX(1.0203)">Filters</span>
<span class="t" style="left:912.50px;top:178.07px;font-size:10.2px;line-height:14px;color:#5c5c5c;transform:scaleX(1.0152)">Filter</span>
<span class="t" style="left:301.10px;top:210.77px;font-size:10.2px;line-height:14px;color:#1c1c1c;transform:scaleX(1.0555)">Downloads</span>
<span class="t" style="left:864.00px;top:211.07px;font-size:10.2px;line-height:14px;color:#6d6d6d;transform:scaleX(1.0326)">Search Downloads</span>
<span class="t" style="left:185.10px;top:256.27px;font-size:10.2px;line-height:14px;color:#1c1c1c;transform:scaleX(1.0694)">Downloads</span>
<span class="t" style="left:185.10px;top:285.17px;font-size:10.2px;line-height:14px;color:#1c1c1c;transform:scaleX(1.0237)">Desktop</span>
<span class="t" style="left:185.10px;top:314.07px;font-size:10.2px;line-height:14px;color:#1c1c1c;transform:scaleX(1.0118)">Screenshots</span>
<span class="t" style="left:185.10px;top:342.97px;font-size:10.2px;line-height:14px;color:#1c1c1c;transform:scaleX(1.0789)">mearj</span>
<span class="t" style="left:185.10px;top:400.77px;font-size:10.2px;line-height:14px;color:#1c1c1c;transform:scaleX(1.0008)">This PC</span>
<span class="t" style="left:192.30px;top:429.67px;font-size:10.2px;line-height:14px;color:#1c1c1c;transform:scaleX(1.0210)">Local Disk (C:)</span>
<span class="t" style="left:192.30px;top:458.57px;font-size:10.2px;line-height:14px;color:#1c1c1c;transform:scaleX(1.0210)">Local Disk (D:)</span>
<span class="t" style="left:192.30px;top:487.47px;font-size:10.2px;line-height:14px;color:#1c1c1c;transform:scaleX(1.0415)">New Volume (F:)</span>
<span class="t" style="left:185.10px;top:516.37px;font-size:10.2px;line-height:14px;color:#1c1c1c;transform:scaleX(1.0688)">Network</span>
<span class="t" style="left:185.10px;top:545.27px;font-size:10.2px;line-height:14px;color:#1c1c1c;transform:scaleX(1.0634)">Linux</span>
<span class="t" style="left:339.40px;top:250.80px;font-size:13px;line-height:18px;color:#2e3c88;transform:scaleX(1.0031)">Today</span>
<span class="t" style="left:338.31px;top:410.50px;font-size:13px;line-height:18px;color:#2e3c88;transform:scaleX(0.9874)">Last week</span>
<span class="t" style="left:338.27px;top:437.70px;font-size:13px;line-height:18px;color:#2e3c88;transform:scaleX(1.0272)">Last month</span>
<span class="t" style="left:338.30px;top:464.90px;font-size:13px;line-height:18px;color:#2e3c88;transform:scaleX(1.0047)">Earlier this year</span>
<span class="t" style="left:339.30px;top:492.10px;font-size:13px;line-height:18px;color:#2e3c88;transform:scaleX(1.0710)">A long time ago</span>
<span class="t" style="left:355.50px;top:362.97px;font-size:10.2px;line-height:14px;color:#1c1c1c;transform:scaleX(1.0202)">classic file</span>
<span class="t" style="left:354.30px;top:376.17px;font-size:10.2px;line-height:14px;color:#1c1c1c;transform:scaleX(1.0533)">explorer in</span>
<span class="t" style="left:343.35px;top:389.37px;font-size:10.2px;line-height:14px;color:#1c1c1c;transform:scaleX(1.0508)">windows 11.jpg</span>
<span class="t" style="left:147.80px;top:672.97px;font-size:10.2px;line-height:14px;color:#36446e;transform:scaleX(1.0233)">232 items</span>
<span class="t" style="left:212.50px;top:672.97px;font-size:10.2px;line-height:14px;color:#36446e;transform:scaleX(1.0254)">1 item selected</span>
<span class="t" style="left:289.80px;top:672.97px;font-size:10.2px;line-height:14px;color:#36446e;transform:scaleX(0.9371)">115 KB</span>
</div></div>
</body></html>
